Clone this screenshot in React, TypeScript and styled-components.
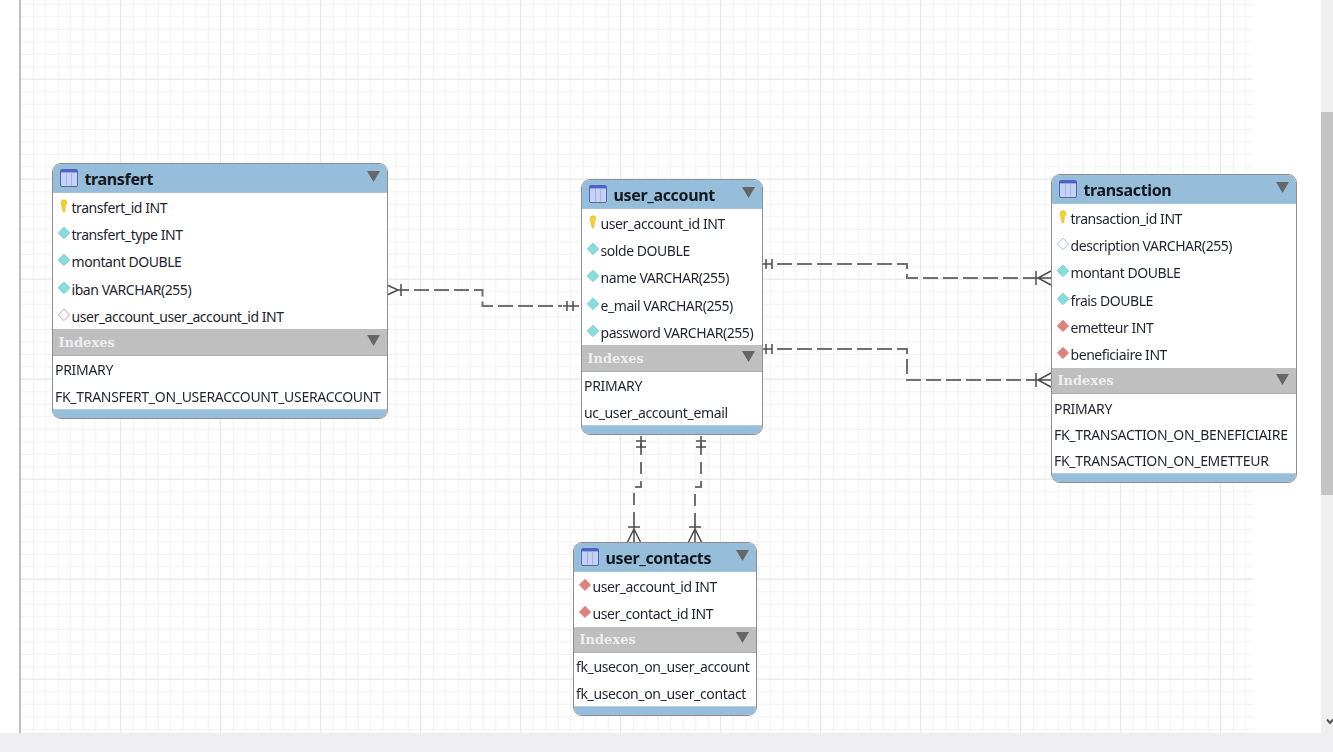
import React from "react";
import styled, { createGlobalStyle } from "styled-components";

const Global = createGlobalStyle`
  html, body { margin: 0; padding: 0; height: 100%; overflow: hidden; background: #fff; }
  #root { height: 752px; width: 1333px; }
`;

const Page = styled.div`
  width: 1333px;
  height: 752px;
  display: grid;
  grid-template-columns: 1321px 12px;
  grid-template-rows: 733px 19px;
  background: #fff;
`;

const Stage = styled.div`
  position: relative;
  padding-left: 19px;
  overflow: hidden;
  filter: blur(0.4px);
`;

const Grid = styled.div`
  width: 1232px;
  height: 733px;
  border-left: 2px solid #c0c0c0;
  background-image:
    linear-gradient(to right, #e7e7e7 1.3px, transparent 1.3px),
    linear-gradient(to bottom, #e7e7e7 1.3px, transparent 1.3px),
    linear-gradient(to right, #f1f1f1 1.3px, transparent 1.3px),
    linear-gradient(to bottom, #f1f1f1 1.3px, transparent 1.3px);
  background-size: 100px 100px, 100px 100px, 12.5px 12.5px, 12.5px 12.5px;
  background-position: 99px 0, 0 78.5px, 11.8px 0, 0 3.8px;
`;

const Scrollbar = styled.div`
  position: relative;
  background: #efefef;
`;

const Thumb = styled.div`
  position: absolute;
  left: 0;
  right: 0;
  top: 112px;
  height: 383px;
  background: #c4c4c4;
`;

const Chevron = styled.svg`
  position: absolute;
  left: 5px;
  top: 718px;
`;

const BottomBar = styled.div`
  grid-column: 1 / span 2;
  background: #efeff1;
`;

const Card = styled.div<{ $x: number; $y: number; $w: number }>`
  position: absolute;
  left: ${(p) => p.$x}px;
  top: ${(p) => p.$y}px;
  width: ${(p) => p.$w}px;
  box-sizing: border-box;
  border: 1px solid #8e8e8e;
  border-radius: 9px;
  overflow: hidden;
  background: #fff;
  font-family: "Noto Sans", "Open Sans", sans-serif;
  color: #1f2430;
`;

const Header = styled.div`
  height: 29px;
  box-sizing: border-box;
  padding: 0 7px;
  display: flex;
  align-items: center;
  background: #96bdd9;
  border-bottom: 1px solid #a9c3d6;
`;

const Title = styled.span`
  margin: 2px 0 0 7px;
  font-size: 16px;
  font-weight: 700;
  color: #14181f;
  flex: 1;
  letter-spacing: -0.35px;
`;

const Caret = styled.svg`
  flex: none;
  margin-top: -3px;
`;

const Row = styled.div`
  height: 27.3px;
  box-sizing: border-box;
  padding: 1.5px 0 0 5px;
  display: flex;
  align-items: center;
  font-size: 14px;
  white-space: nowrap;
  letter-spacing: -0.44px;
`;

const RowIcon = styled.svg`
  flex: none;
  margin-right: 2px;
  margin-top: -3px;
`;

const Band = styled.div`
  height: 26.5px;
  box-sizing: border-box;
  padding: 0 7px 0 6px;
  display: flex;
  align-items: center;
  justify-content: space-between;
  background: #bfbfbf;
  border-bottom: 1px solid #adadad;
  font-family: "DejaVu Serif", serif;
  font-size: 13px;
  font-weight: 700;
  color: #eeeeee;
`;

const IndexRow = styled.div<{ $caps: boolean }>`
  height: 26.3px;
  box-sizing: border-box;
  padding: 1.5px 0 0 2.5px;
  display: flex;
  align-items: center;
  font-size: 14px;
  white-space: nowrap;
  letter-spacing: ${(p) => (p.$caps ? "-0.3px" : "-0.36px")};
`;

const Footer = styled.div`
  height: 9px;
  box-sizing: border-box;
  background: #96bdd9;
  border-top: 1px solid #b9cfde;
`;

const Links = styled.svg`
  position: absolute;
  left: 0;
  top: 0;
  pointer-events: none;
`;

type Kind = "key" | "col" | "nul" | "fk" | "nfk";
type TableDef = {
  name: string;
  x: number;
  y: number;
  w: number;
  cols: [Kind, string][];
  idx: string[];
};

const tables: TableDef[] = [
  {
    name: "transfert",
    x: 51.5,
    y: 163,
    w: 336,
    cols: [
      ["key", "transfert_id INT"],
      ["col", "transfert_type INT"],
      ["col", "montant DOUBLE"],
      ["col", "iban VARCHAR(255)"],
      ["nfk", "user_account_user_account_id INT"],
    ],
    idx: ["PRIMARY", "FK_TRANSFERT_ON_USERACCOUNT_USERACCOUNT"],
  },
  {
    name: "user_account",
    x: 580.5,
    y: 179,
    w: 182,
    cols: [
      ["key", "user_account_id INT"],
      ["col", "solde DOUBLE"],
      ["col", "name VARCHAR(255)"],
      ["col", "e_mail VARCHAR(255)"],
      ["col", "password VARCHAR(255)"],
    ],
    idx: ["PRIMARY", "uc_user_account_email"],
  },
  {
    name: "transaction",
    x: 1050.5,
    y: 174,
    w: 246,
    cols: [
      ["key", "transaction_id INT"],
      ["nul", "description VARCHAR(255)"],
      ["col", "montant DOUBLE"],
      ["col", "frais DOUBLE"],
      ["fk", "emetteur INT"],
      ["fk", "beneficiaire INT"],
    ],
    idx: ["PRIMARY", "FK_TRANSACTION_ON_BENEFICIAIRE", "FK_TRANSACTION_ON_EMETTEUR"],
  },
  {
    name: "user_contacts",
    x: 572.5,
    y: 542,
    w: 184,
    cols: [
      ["fk", "user_account_id INT"],
      ["fk", "user_contact_id INT"],
    ],
    idx: ["fk_usecon_on_user_account", "fk_usecon_on_user_contact"],
  },
];

const TableGlyph = () => (
  <svg width="18" height="18" viewBox="0 0 18 18" style={{ flex: "none" }}>
    <rect x="0.5" y="0.5" width="17" height="17" rx="1.5" fill="#c6d2f2" stroke="#4f66c2" />
    <rect x="1" y="1" width="16" height="2.4" fill="#4c63c4" />
    <path d="M6.5 3.5v13M11.5 3.5v13" stroke="#a3b3e6" strokeWidth="1" />
    <path d="M1 17.5h16" stroke="#5d6690" strokeWidth="1" />
  </svg>
);

const CaretDown = () => (
  <Caret width="13" height="11" viewBox="0 0 13 11">
    <path d="M0 0h13L6.5 11z" fill="#666" />
  </Caret>
);

const fills: Record<Exclude<Kind, "key">, [string, string]> = {
  col: ["#84e0e0", "#7cc0c6"],
  nul: ["#ffffff", "#8fc4c4"],
  fk: ["#e2807c", "#cf8f8c"],
  nfk: ["#ffffff", "#c99a98"],
};

const ColumnIcon = ({ kind }: { kind: Kind }) => {
  if (kind === "key") {
    return (
      <RowIcon width="12" height="14" viewBox="0 0 12 14">
        <path d="M3.2 3.6a2.8 2.8 0 0 1 5.6 0c0 1.4-.8 2.3-1.5 2.8L6.8 12.6 5.6 13 5 12z" fill="#f5d327" stroke="#d9ad12" strokeWidth=".6" />
      </RowIcon>
    );
  }
  const [f, s] = fills[kind];
  return (
    <RowIcon width="12" height="14" viewBox="0 0 12 14">
      <path d="M6 1.2 11.6 7 6 12.6.4 7z" fill={f} stroke={s} strokeWidth="1" />
    </RowIcon>
  );
};

const ErTable = ({ t }: { t: TableDef }) => (
  <Card $x={t.x} $y={t.y} $w={t.w}>
    <Header>
      <TableGlyph />
      <Title>{t.name}</Title>
      <CaretDown />
    </Header>
    <div>
      {t.cols.map(([k, label]) => (
        <Row key={label}>
          <ColumnIcon kind={k} />
          {label}
        </Row>
      ))}
    </div>
    <Band>
      Indexes
      <CaretDown />
    </Band>
    <div>
      {t.idx.map((label) => (
        <IndexRow key={label} $caps={label === label.toUpperCase()}>
          {label}
        </IndexRow>
      ))}
    </div>
    <Footer />
  </Card>
);

const dashH = { stroke: "#707070", strokeWidth: 2, strokeDasharray: "15 5", fill: "none" };
const dashV = { stroke: "#707070", strokeWidth: 2, strokeDasharray: "12 7", fill: "none" };
const solid = { stroke: "#4c4c4c", strokeWidth: 1.5, fill: "none" };

const Connectors = () => (
  <Links width="1321" height="733" viewBox="0 0 1321 733">
    <path d="M403 290H482.5V306H562" strokeDashoffset="9" {...dashH} />
    <path d="M387 285 398 290 387 295M398 290H403M401 284V296" {...solid} />
    <path d="M567 301V311M573 301V311M563 306H579" {...solid} />

    <path d="M774 264H907V278H1034" strokeDashoffset="17" {...dashH} />
    <path d="M763 264H772M766 259V269M772 259V269" {...solid} />
    <path d="M1034 278H1051M1036 271V285M1051 271 1038 278 1051 285" {...solid} />

    <path d="M774 349H907V380H1034" strokeDashoffset="17" {...dashH} />
    <path d="M763 349H772M766 344V354M772 344V354" {...solid} />
    <path d="M1034 380H1051M1036 373V387M1051 373 1038 380 1051 387" {...solid} />

    <path d="M641 443V487H634V526" {...dashV} />
    <path d="M641 436V448M636 441H646M636 447H646" {...solid} />
    <path d="M634 524V542M628 527H640M627.5 542 634 529 640.5 542" {...solid} />

    <path d="M701 443V487H695V526" {...dashV} />
    <path d="M701 436V448M696 441H706M696 447H706" {...solid} />
    <path d="M695 524V542M689 527H701M688.5 542 695 529 701.5 542" {...solid} />
  </Links>
);

export default function App() {
  return (
    <Page>
      <Global />
      <Stage>
        <Grid />
        <Connectors />
        {tables.map((t) => (
          <ErTable key={t.name} t={t} />
        ))}
      </Stage>
      <Scrollbar>
        <Thumb />
        <Chevron width="8" height="7" viewBox="0 0 8 7">
          <path d="M1 1.5 4 5l3-3.5" stroke="#555" strokeWidth="2" fill="none" />
        </Chevron>
      </Scrollbar>
      <BottomBar />
    </Page>
  );
}
